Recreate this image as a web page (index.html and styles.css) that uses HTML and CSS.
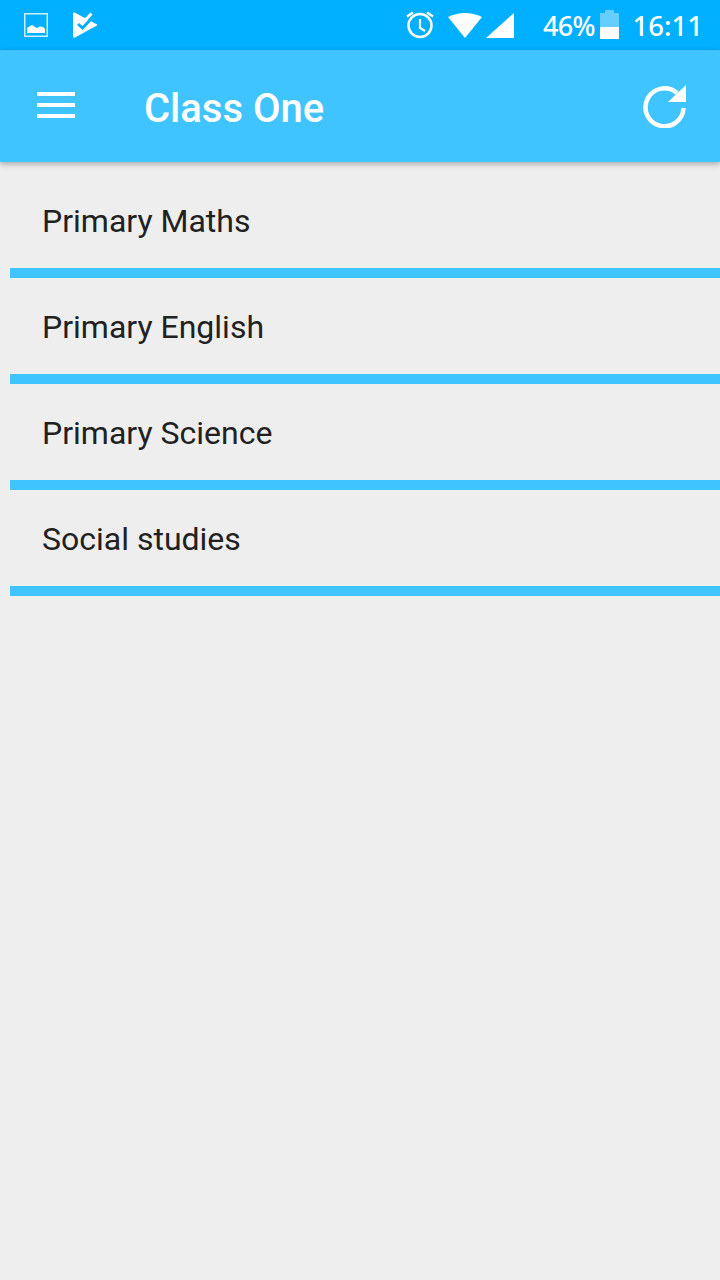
FILE: index.html
```html
<!DOCTYPE html>
<html>
<head>
    <meta charset="UTF-8">
    <link rel="stylesheet" href="styles.css">
</head>
<body>
    <div class="status-bar">
        <svg class="icon-image" width="24" height="24" viewBox="0 0 24 24">
            <rect x="0.750" y="0.750" width="22.500" height="22.500" fill="none" stroke="#cdefff" stroke-width="1.500"/>
            <path d="M3 20V15L6 13L8 12L11 14L13 15L16 13.500L19 14L21 16V20Z" fill="#fff"/>
        </svg>
        <svg class="icon-check" width="26" height="26" viewBox="0 0 26 26">
            <path d="M1 1.500Q1 0 2.500 0.500L25 12.500Q25.500 13 25 13.500L3 25.500Q1 26 1 24.500Z" fill="#fff"/>
            <path d="M6 12L10.500 16L21 5" fill="none" stroke="#00b0ff" stroke-width="3"/>
            <path d="M11.500 10L19.500 1.500" fill="none" stroke="#fff" stroke-width="3"/>
        </svg>
        <div class="status-right">
            <svg class="icon-alarm" width="28" height="28" viewBox="0 0 28 28">
                <circle cx="14" cy="14.500" r="11.500" fill="none" stroke="#fff" stroke-width="2.500"/>
                <path d="M14 8V17L19 20" fill="none" stroke="#fff" stroke-width="2.200"/>
                <path d="M1 5.500L7 1.500M27 5.500L21 1.500" fill="none" stroke="#fff" stroke-width="2.400"/>
            </svg>
            <svg class="icon-wifi" width="34" height="28" viewBox="0 0 34 28">
                <path d="M0 6Q17 -2 34 6L17 27Z" fill="#fff"/>
            </svg>
            <svg class="icon-signal" width="28" height="28" viewBox="0 0 28 28">
                <path d="M0 27L28 2V27Z" fill="#fff"/>
            </svg>
            <span class="battery-text">46%</span>
            <div class="battery">
                <div class="battery-cap"></div>
                <div class="battery-empty"></div>
                <div class="battery-full"></div>
            </div>
            <span class="clock">16:11</span>
        </div>
    </div>

    <div class="toolbar">
        <div class="menu-icon">
            <span></span>
            <span></span>
            <span></span>
        </div>
        <div class="toolbar-title">Class One</div>
        <svg class="icon-refresh" width="44" height="44" viewBox="0 0 44 44">
            <path d="M34 9A19 19 0 1 0 40.500 24" fill="none" stroke="#fff" stroke-width="4.500"/>
            <path d="M43 1V18H25Z" fill="#fff"/>
        </svg>
    </div>

    <div class="subject-list">
        <div class="subject">Primary Maths</div>
        <div class="subject">Primary English</div>
        <div class="subject">Primary Science</div>
        <div class="subject">Social studies</div>
    </div>
</body>
</html>
```

FILE: styles.css
```css
html, body {
    height: 100%;
}

body {
    margin: 0;
    background-color: #eeeeee;
    font-family: Roboto, sans-serif;
    overflow: hidden;
}

.status-bar {
    height: 50px;
    background-color: #00b0ff;
    display: flex;
    align-items: center;
    color: #fff;
}

.icon-image {
    margin-left: 24px;
}

.icon-check {
    margin-left: 24px;
}

.status-right {
    margin-left: auto;
    display: flex;
    align-items: center;
    padding-right: 17px;
}

.icon-wifi {
    margin-left: 14px;
}

.icon-signal {
    margin-left: 4px;
}

.battery-text, .clock {
    font-family: "Noto Sans", sans-serif;
    font-size: 27.500px;
    font-weight: 500;
}

.battery-text {
    font-size: 27px;
    margin-left: 29px;
    letter-spacing: -0.800px;
}

.battery {
    width: 19px;
    height: 29px;
    margin-left: 5px;
    margin-top: -1px;
    display: flex;
    flex-direction: column;
    align-items: center;
}

.battery-cap {
    width: 9px;
    height: 3px;
    background-color: #66ceff;
}

.battery-empty {
    width: 19px;
    height: 14px;
    background-color: #66ceff;
}

.battery-full {
    width: 19px;
    height: 12px;
    background-color: #fff;
}

.clock {
    margin-left: 14px;
}

.toolbar {
    height: 112px;
    background-color: #40c4ff;
    display: flex;
    align-items: center;
    box-shadow: 0 2px 6px rgba(0, 0, 0, 0.3);
    position: relative;
}

.menu-icon {
    width: 38px;
    margin-left: 37px;
    margin-top: -2px;
    display: flex;
    flex-direction: column;
    gap: 7px;
}

.menu-icon span {
    display: block;
    height: 4px;
    background-color: #fff;
}

.toolbar-title {
    margin-left: 69px;
    margin-top: 4px;
    font-size: 40px;
    font-weight: 500;
    color: #fff;
}

.icon-refresh {
    margin-left: auto;
    margin-right: 33px;
}

.subject-list {
    padding-top: 10px;
}

.subject {
    height: 94px;
    margin-left: 10px;
    padding-left: 32px;
    padding-top: 2px;
    border-bottom: 10px solid #40c4ff;
    display: flex;
    align-items: center;
    font-size: 32px;
    color: #212121;
}
```
